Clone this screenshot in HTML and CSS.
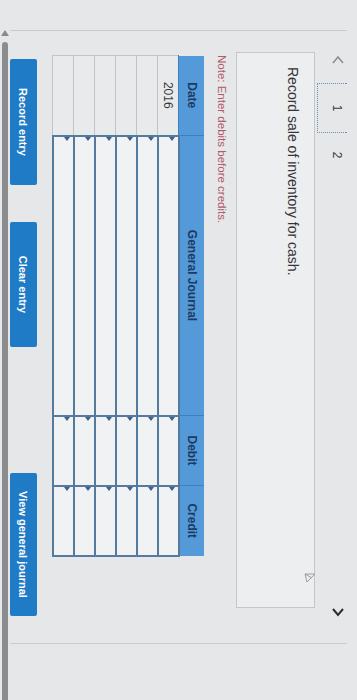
FILE: index.html
```html
<!DOCTYPE html>
<html lang="en">
<head>
<meta charset="utf-8">
<title>Journal entry</title>
<link rel="stylesheet" href="styles.css">
</head>
<body>
<div class="viewport">
<div class="stage">
  <div class="main">
    <div class="content">
      <div class="pager">
        <span class="chev chev-left"><svg width="10" height="12" viewBox="0 0 10 12"><path d="M8 1 L2 6 L8 11" fill="none" stroke="#8d8f91" stroke-width="1.6"/></svg></span>
        <span class="page current">1</span>
        <span class="page">2</span>
        <span class="chev chev-right"><svg width="10" height="12" viewBox="0 0 10 12"><path d="M2 1 L8 6 L2 11" fill="none" stroke="#2b2d2f" stroke-width="2"/></svg></span>
      </div>
      <div class="question">
        <p class="qtext">Record sale of inventory for cash.</p>
        <svg class="grip" width="10" height="12" viewBox="0 0 10 12"><path d="M1 1 L1 11 L9 9 Z" fill="none" stroke="#9a9c9e" stroke-width="1"/><path d="M1 11 L5 4" stroke="#9a9c9e" stroke-width="1"/></svg>
      </div>
      <p class="note">Note: Enter debits before credits.</p>
      <table class="journal">
        <colgroup><col class="c-date"><col class="c-gj"><col class="c-num"><col class="c-num"></colgroup>
        <thead>
          <tr><th>Date</th><th>General Journal</th><th>Debit</th><th>Credit</th></tr>
        </thead>
        <tbody>
          <tr><td class="date">2016</td><td class="in"></td><td class="in"></td><td class="in"></td></tr>
          <tr><td class="date"></td><td class="in"></td><td class="in"></td><td class="in"></td></tr>
          <tr><td class="date"></td><td class="in"></td><td class="in"></td><td class="in"></td></tr>
          <tr><td class="date"></td><td class="in"></td><td class="in"></td><td class="in"></td></tr>
          <tr><td class="date"></td><td class="in"></td><td class="in"></td><td class="in"></td></tr>
          <tr><td class="date"></td><td class="in"></td><td class="in"></td><td class="in"></td></tr>
        </tbody>
      </table>
      <div class="buttons">
        <button class="btn btn-record">Record entry</button>
        <button class="btn btn-clear">Clear entry</button>
        <button class="btn btn-view">View general journal</button>
      </div>
    </div>
  </div>
  <div class="hscroll">
    <span class="arrow"></span>
    <span class="bar"></span>
  </div>
</div>
</div>
</body>
</html>
```
FILE: styles.css
```css
html, body {
  margin: 0;
  padding: 0;
  width: 357px;
  height: 700px;
  overflow: hidden;
  background: #e6e7e8;
  font-family: "Liberation Sans", Arial, sans-serif;
}

.viewport {
  width: 357px;
  height: 700px;
  overflow: hidden;
}

.stage {
  width: 700px;
  height: 357px;
  background: #e6e7e8;
  transform-origin: 0 0;
  transform: translateX(357px) rotate(90deg);
  display: flex;
  flex-direction: column;
}

.main {
  height: 347px;
  display: flex;
}

.content {
  margin-top: 10px;
  margin-left: 30px;
  width: 614px;
  box-sizing: border-box;
  border-left: 1px solid #c9cacb;
  border-right: 1px solid #c9cacb;
  padding-left: 21px;
  display: flex;
  flex-direction: column;
  align-items: flex-start;
}

.pager {
  width: 100%;
  height: 32px;
  display: flex;
  align-items: flex-start;
  font-size: 12px;
  color: #3a3c3e;
}

.chev {
  display: block;
  margin-top: 3px;
  line-height: 0;
}

.chev-left {
  margin-left: 3px;
}

.chev-right {
  margin-left: auto;
  margin-right: 26px;
}

.page {
  display: block;
  width: 22px;
  height: 26px;
  padding-top: 3px;
  text-align: center;
  line-height: 14px;
}

.page.current {
  margin-left: 18px;
  width: 48px;
  border: 1px dotted #6b8fb0;
  border-top: none;
}

.page + .page {
  margin-left: 11px;
}

.question {
  position: relative;
  width: 556px;
  height: 79px;
  box-sizing: border-box;
  border: 1px solid #c4c7ca;
  background: #eceef0;
  padding: 13px 0 0 14px;
}

.qtext {
  margin: 0;
  font-size: 14px;
  line-height: 16px;
  color: #333537;
}

.grip {
  position: absolute;
  left: 520px;
  top: -2px;
}

.note {
  margin: 6px 0 0 3px;
  font-size: 11.5px;
  line-height: 16px;
  color: #b05a6c;
}

.journal {
  margin: 10px 0 0 3px;
  width: 500px;
  border-collapse: collapse;
  table-layout: fixed;
}

.c-date { width: 80px; }
.c-gj { width: 280px; }
.c-num { width: 70px; }

.journal th {
  height: 24px;
  padding: 0;
  background: #559ad8;
  color: #1b3a64;
  font-size: 12px;
  font-weight: bold;
  text-align: center;
  border-left: 1px solid #3d7fbf;
  border-bottom: 1px solid #3d7fbf;
}

.journal th:first-child {
  border-left: none;
}

.journal td {
  height: 21px;
  padding: 0;
  box-sizing: border-box;
}

.journal td.date {
  border: 1px solid #c2c5c8;
  background: #e8eaec;
  text-align: center;
  font-size: 12px;
  color: #3a3c3e;
}

.journal td.in {
  position: relative;
  border: 2px solid #557a9f;
  background: #f0f2f4;
}

.journal td.in::before {
  content: "";
  position: absolute;
  left: 0;
  top: 3px;
  border-left: 4px solid #3f6189;
  border-top: 3px solid transparent;
  border-bottom: 3px solid transparent;
}

.buttons {
  margin-top: 15px;
  display: flex;
}

.btn {
  height: 27px;
  padding: 0;
  border: none;
  border-radius: 2px;
  background: #1f7bc6;
  color: #ffffff;
  font-family: "Liberation Sans", Arial, sans-serif;
  font-size: 11px;
  font-weight: bold;
}

.btn-record { margin-left: 7px; width: 126px; }
.btn-clear { margin-left: 37px; width: 125px; }
.btn-view { margin-left: 126px; width: 143px; }

.hscroll {
  height: 10px;
  display: flex;
  align-items: center;
}

.arrow {
  margin-left: 30px;
  width: 0;
  height: 0;
  border-right: 6px solid #8a8b8c;
  border-top: 4px solid transparent;
  border-bottom: 4px solid transparent;
}

.bar {
  margin-left: 6px;
  flex: 1;
  height: 6px;
  border-radius: 3px 0 0 3px;
  background: #8b8c8d;
}
```
